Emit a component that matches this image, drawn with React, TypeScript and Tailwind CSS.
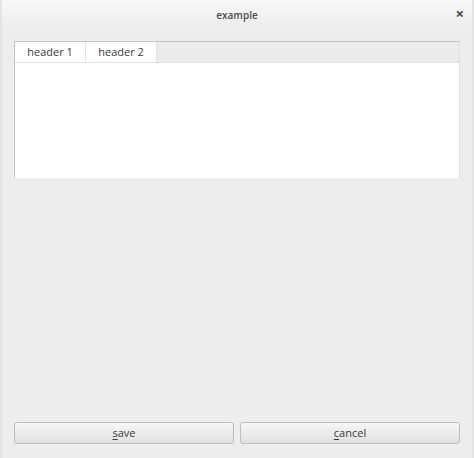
export default function App() {
  return (
    <div
      className="w-[474px] h-[458px] flex flex-col bg-[#ededed] border-l-2 border-r-2 border-[#e4e4e4] overflow-hidden"
      style={{ fontFamily: '"Open Sans", "Noto Sans", sans-serif' }}
    >
      {/* title bar */}
      <div className="h-[30px] shrink-0 flex items-center relative bg-gradient-to-b from-[#f7f7f7] to-[#ececec]">
        <div className="flex-1 text-center text-[10px] font-semibold text-[#4a4d50]">example</div>
        <div className="absolute right-[8px] top-[6px] text-[15px] font-bold text-[#4a4d50] leading-none">×</div>
      </div>

      {/* tab pane */}
      <div className="mt-[11px] mx-[12px] h-[137px] flex flex-col border-t border-l border-r border-[#c4c4c4] border-r-[#e0e0e0] bg-white">
        <div className="h-[21px] shrink-0 flex bg-[#ebebeb] border-b border-[#e0e0e0]">
          <div className="w-[71px] flex items-center justify-center bg-white border-r border-[#e2e2e2] text-[11px] text-[#3a3a3a]">
            header 1
          </div>
          <div className="w-[71px] flex items-center justify-center bg-white border-r border-[#e2e2e2] text-[11px] text-[#3a3a3a]">
            header 2
          </div>
        </div>
        <div className="flex-1 bg-white" />
      </div>

      <div className="flex-1" />

      {/* buttons */}
      <div className="h-[22px] mx-[12px] mb-[14px] flex gap-[6px]">
        <button className="flex-1 rounded-[3px] border border-[#bdbdbd] bg-gradient-to-b from-[#f6f6f6] to-[#e1e1e1] text-[11px] text-[#3a3a3a]">
          <span className="underline underline-offset-2">s</span>ave
        </button>
        <button className="flex-1 rounded-[3px] border border-[#bdbdbd] bg-gradient-to-b from-[#f6f6f6] to-[#e1e1e1] text-[11px] text-[#3a3a3a]">
          <span className="underline underline-offset-2">c</span>ancel
        </button>
      </div>
    </div>
  )
}
